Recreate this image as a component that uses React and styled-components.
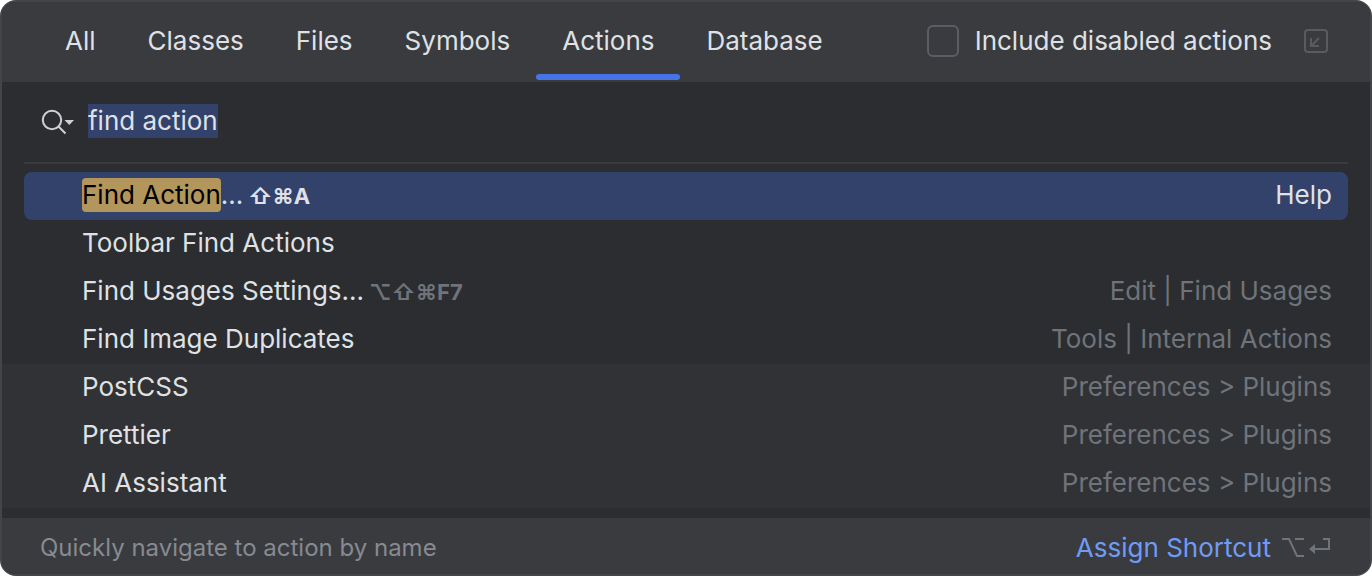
import { useEffect, useRef, useState } from 'react'
import styled, { createGlobalStyle } from 'styled-components'

const colors = {
  header: '#3a3b3f',
  body: '#2b2d30',
  plugin: '#313235',
  border: '#43454a',
  text: '#dfe1e5',
  muted: '#6f737a',
  hint: '#868a91',
  selected: '#33426b',
  match: '#b3965b',
  accent: '#4674e6',
  link: '#6f9bf5',
}

const GlobalStyle = createGlobalStyle`
  body {
    margin: 0;
    background: #ffffff;
  }

  * {
    box-sizing: border-box;
  }

  body, button, input {
    font-family: Inter, "Liberation Sans", sans-serif;
    font-size: 26px;
    line-height: 34px;
  }
`

const Dialog = styled.main`
  border: 2px solid ${colors.border};
  border-radius: 16px;
  background: ${colors.body};
  color: ${colors.text};
  overflow: hidden;
  white-space: nowrap;
`

const Header = styled.header`
  display: flex;
  align-items: stretch;
  justify-content: space-between;
  height: 80px;
  padding: 0 42px 0 37px;
  background: ${colors.header};
`

const Tabs = styled.nav`
  display: flex;
`

const Tab = styled.button`
  display: flex;
  flex-direction: column;
  justify-content: space-between;
  padding: 22px 26px 0;
  border: 0;
  background: none;
  color: inherit;
  cursor: pointer;
`

const Underline = styled.span`
  align-self: stretch;
  height: 6px;
  margin: 0 -26px 2px;
  border-radius: 3px;
  background: ${(props) => (props.$active ? colors.accent : 'transparent')};
`

const Options = styled.div`
  display: flex;
  align-items: center;
  gap: 32px;
  padding-bottom: 3px;
`

const CheckLabel = styled.label`
  display: flex;
  align-items: center;
  gap: 16px;
`

const Checkbox = styled.input`
  appearance: none;
  width: 32px;
  height: 32px;
  margin: 0;
  border: 2px solid #5a5d63;
  border-radius: 6px;

  &:checked {
    background: ${colors.accent};
  }
`

const IconButton = styled.button`
  display: flex;
  padding: 0;
  border: 0;
  background: none;
`

const SearchBar = styled.div`
  display: flex;
  align-items: center;
  gap: 14px;
  height: 82px;
  margin: 0 22px;
  padding: 0 16px 2px;
  border-bottom: 2px solid #393b40;
`

const SearchInput = styled.input`
  flex: 1;
  min-width: 0;
  height: 34px;
  padding: 0;
  border: 0;
  outline: 0;
  background: none;
  color: inherit;

  &::selection {
    background: ${colors.selected};
    color: ${colors.text};
  }
`

const Results = styled.ul`
  margin: 0;
  padding: 8px 0 10px;
  list-style: none;
`

const Row = styled.li`
  padding: 0 22px;
  background: ${(props) => (props.$plugin ? colors.plugin : 'transparent')};
`

const RowContent = styled.div`
  display: flex;
  align-items: center;
  justify-content: space-between;
  height: 48px;
  padding: 0 16px 2px 58px;
  border-radius: 8px;
  background: ${(props) => (props.$selected ? colors.selected : 'transparent')};
`

const Name = styled.span`
  display: flex;
  align-items: center;
`

const Match = styled.mark`
  border-radius: 4px;
  background: ${colors.match};
  color: #000000;
`

const Keys = styled.kbd`
  margin-left: 5px;
  padding-top: 2px;
  color: ${(props) => (props.$selected ? colors.text : colors.muted)};
  font-family: inherit;
  font-size: 22px;
  font-weight: 700;
`

const Location = styled.span`
  color: ${(props) => (props.$selected ? colors.text : colors.muted)};
`

const Footer = styled.footer`
  display: flex;
  align-items: center;
  justify-content: space-between;
  height: 56px;
  padding: 3px 40px 0 38px;
  background: ${colors.header};
`

const Hint = styled.span`
  color: ${colors.hint};
  font-size: 24px;
`

const Assign = styled.div`
  display: flex;
  align-items: center;
  gap: 11px;
`

const Link = styled.a`
  color: ${colors.link};
  text-decoration: none;
`

const tabs = ['All', 'Classes', 'Files', 'Symbols', 'Actions', 'Database']

const results = [
  { match: 'Find Action', name: '...', keys: '⇧⌘A', location: 'Help' },
  { name: 'Toolbar Find Actions' },
  { name: 'Find Usages Settings...', keys: '⌥⇧⌘F7', location: 'Edit | Find Usages' },
  { name: 'Find Image Duplicates', location: 'Tools | Internal Actions' },
  { name: 'PostCSS', location: 'Preferences > Plugins', plugin: true },
  { name: 'Prettier', location: 'Preferences > Plugins', plugin: true },
  { name: 'AI Assistant', location: 'Preferences > Plugins', plugin: true },
]

function SearchIcon() {
  return (
    <svg width="34" height="28" viewBox="0 0 34 28" fill="none" aria-hidden="true">
      <circle cx="12" cy="13" r="9.2" stroke="#ced0d6" strokeWidth="2" />
      <path d="M18.5 19.5l7 7" stroke="#ced0d6" strokeWidth="2" />
      <path d="M24.5 13h9.5l-4.75 5z" fill="#ced0d6" />
    </svg>
  )
}

function OpenIcon() {
  return (
    <svg width="24" height="24" viewBox="0 0 24 24" fill="none" stroke="#5a5b5c" strokeWidth="2" aria-hidden="true">
      <rect x="1" y="1" width="22" height="22" rx="3" />
      <path d="M15 9l-7 7M7 9v8h8" />
    </svg>
  )
}

function AssignKeys() {
  return (
    <svg width="48" height="22" viewBox="0 0 48 22" fill="none" stroke={colors.muted} strokeWidth="2" role="img" aria-label="Option Return">
      <path d="M0 2h7l8 17h7M13 2h9" />
      <path d="M41 2h6v10H32" />
      <path d="M27 12l6-5v10z" fill={colors.muted} stroke="none" />
    </svg>
  )
}

function Result({ item, selected, onSelect }) {
  return (
    <Row $plugin={item.plugin} onClick={onSelect}>
      <RowContent $selected={selected}>
        <Name>
          {item.match && <Match>{item.match}</Match>}
          {item.name}
          {item.keys && <Keys $selected={selected}>{item.keys}</Keys>}
        </Name>
        <Location $selected={selected}>{item.location}</Location>
      </RowContent>
    </Row>
  )
}

export default function App() {
  const [tab, setTab] = useState('Actions')
  const [query, setQuery] = useState('find action')
  const [selected, setSelected] = useState(0)
  const input = useRef(null)

  useEffect(() => {
    input.current.focus()
    input.current.select()
  }, [])

  return (
    <>
      <GlobalStyle />
      <Dialog>
        <Header>
          <Tabs>
            {tabs.map((name) => (
              <Tab key={name} onClick={() => setTab(name)}>
                {name}
                <Underline $active={name === tab} />
              </Tab>
            ))}
          </Tabs>
          <Options>
            <CheckLabel>
              <Checkbox type="checkbox" />
              Include disabled actions
            </CheckLabel>
            <IconButton aria-label="Open in Find Tool Window">
              <OpenIcon />
            </IconButton>
          </Options>
        </Header>
        <SearchBar>
          <SearchIcon />
          <SearchInput ref={input} aria-label="Search" value={query} onChange={(e) => setQuery(e.target.value)} />
        </SearchBar>
        <Results>
          {results.map((item, i) => (
            <Result key={i} item={item} selected={i === selected} onSelect={() => setSelected(i)} />
          ))}
        </Results>
        <Footer>
          <Hint>Quickly navigate to action by name</Hint>
          <Assign>
            <Link href="#assign">Assign Shortcut</Link>
            <AssignKeys />
          </Assign>
        </Footer>
      </Dialog>
    </>
  )
}
